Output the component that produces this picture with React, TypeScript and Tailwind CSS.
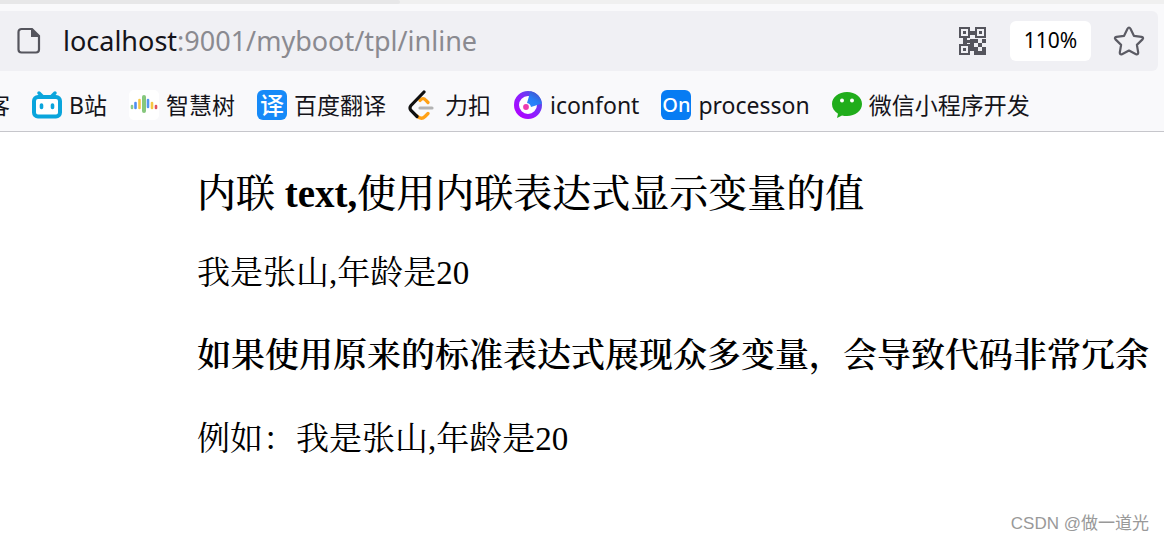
import type { ReactNode } from "react";

const qrCells: [number, number][] = [
  [15, 12], [23, 12],
  [11, 16], [19, 16],
  [15, 20], [23, 20],
  [19, 16], [19, 24],
  [11, 12],
];

function PageIcon() {
  return (
    <svg viewBox="0 0 24 28" className="h-7 w-6" aria-hidden="true">
      <path d="M4.500 2H15l7 7v13.500a3 3 0 0 1-3 3H4.500a3 3 0 0 1-3-3V5a3 3 0 0 1 3-3Z" fill="none" stroke="#55555d" strokeWidth="2.200" />
      <path d="M14 1.500V10h8.500Z" fill="#55555d" />
    </svg>
  );
}

function QrFinder({ x, y }: { x: number; y: number }) {
  return (
    <>
      <rect x={x + 1} y={y + 1} width="9" height="9" fill="none" stroke="#55555d" strokeWidth="2" />
      <rect x={x + 4} y={y + 4} width="3" height="3" fill="#55555d" />
    </>
  );
}

function QrIcon() {
  return (
    <svg viewBox="0 0 27 28" className="h-7 w-[27px]" shapeRendering="crispEdges" aria-hidden="true">
      <QrFinder x={0} y={0} />
      <QrFinder x={16} y={0} />
      <QrFinder x={0} y={17} />
      <path d="M11 4h5v4h-5zM4 11h4v6H4zM8 13h3v3H8zM11 20h4v4h-4zM15 24h4v4h-4zM23 24h4v4h-4z" fill="#55555d" />
      {qrCells.map(([x, y], i) => (
        <rect key={i} x={x} y={y} width="4" height="4" fill="#55555d" />
      ))}
    </svg>
  );
}

function StarIcon() {
  return (
    <svg viewBox="0 0 32 32" className="h-8 w-8" aria-hidden="true">
      <path
        d="M14.500 3.800q1.500-2.600 3 0l3.400 7 7.600 1.100q2.600.600 1 2.500l-5.600 5.500 1.300 7.600q.100 2.500-2.200 1.700L16 25.500l-7 3.700q-2.300.800-2.200-1.700l1.300-7.600-5.600-5.500q-1.600-1.900 1-2.500l7.600-1.100Z"
        fill="none" stroke="#5b5b64" strokeWidth="2.200" strokeLinejoin="round"
      />
    </svg>
  );
}

function BiliIcon() {
  return (
    <svg viewBox="0 0 30 30" className="size-[30px]" aria-hidden="true">
      <path d="M7 3l4 4M23 3l-4 4" stroke="#0aa5dc" strokeWidth="3.500" strokeLinecap="round" />
      <rect x="2" y="7" width="26" height="19.500" rx="4" fill="#fff" stroke="#0aa5dc" strokeWidth="4" />
      <path d="M9.500 15v2.500M20.500 15v2.500" stroke="#0aa5dc" strokeWidth="3.600" strokeLinecap="round" />
    </svg>
  );
}

function TreeIcon() {
  const bars: [number, number, number, string][] = [
    [3, 16, 18, "#8cc98a"],
    [6.5, 13, 18, "#4f8df0"],
    [10.5, 10, 18, "#f6c744"],
    [15, 7, 21, "#86c77c"],
    [19, 10, 17, "#5797ef"],
    [23, 13, 18, "#f6c744"],
    [27, 16, 18, "#e0525d"],
  ];
  return (
    <svg viewBox="0 0 30 30" className="size-[30px]" aria-hidden="true">
      <rect width="30" height="30" rx="5" fill="#fff" />
      {bars.map(([x, top, bottom, color]) => (
        <path key={x} d={`M${x} ${top}V${bottom}`} stroke={color} strokeWidth={x === 15 ? 4 : 2.6} strokeLinecap="round" />
      ))}
    </svg>
  );
}

function LeetIcon() {
  return (
    <svg viewBox="0 0 30 30" className="size-[30px]" fill="none" strokeLinecap="round" strokeWidth="3.200" aria-hidden="true">
      <path d="M12 10.500c2-2.500 4-2.500 6 0l2 2M9 26c3 3 6 2.500 8 .500l3-3" stroke="#ffa116" />
      <path d="M12 18h12" stroke="#b3b3b3" />
      <path d="M16 2L3 15.500q-2 2.500 0 5L9 26.500" stroke="#101010" />
    </svg>
  );
}

function IconfontIcon() {
  return (
    <svg viewBox="0 0 30 30" className="size-[30px]" aria-hidden="true">
      <defs>
        <linearGradient id="ring" x1="0" y1="1" x2="1" y2="0">
          <stop offset="0" stopColor="#b300ff" />
          <stop offset=".5" stopColor="#8c20ff" />
          <stop offset="1" stopColor="#405be0" />
        </linearGradient>
        <linearGradient id="wedge" x1="0" y1="1" x2=".6" y2="0">
          <stop offset="0" stopColor="#2c8bff" />
          <stop offset=".55" stopColor="#287cf5" />
          <stop offset="1" stopColor="#4652cc" />
        </linearGradient>
      </defs>
      <circle cx="15" cy="15" r="11.500" fill="#fff" stroke="url(#ring)" strokeWidth="5" />
      <path d="M17.500 1.200A14 14 0 0 1 28.900 13.500L18 17a5 5 0 0 0-4-4Z" fill="url(#wedge)" />
      <circle cx="13" cy="17" r="2.900" fill="#ed3bb0" />
    </svg>
  );
}

function WechatIcon() {
  return (
    <svg viewBox="0 0 30 30" className="size-[30px]" aria-hidden="true">
      <path d="M15 2C6.700 2 0 7.300 0 14c0 4 2.300 7.500 6 9.700L5 28l5-2.600c1.600.4 3.200.6 5 .6 8.300 0 15-5.300 15-12S23.300 2 15 2Z" fill="#20ad1b" />
      <circle cx="10" cy="10.500" r="2" fill="#fff" />
      <circle cx="20" cy="10.500" r="2" fill="#fff" />
    </svg>
  );
}

function Bookmark({ icon, children }: { icon: ReactNode; children: ReactNode }) {
  return (
    <a href="#" className="flex shrink-0 items-center gap-[7px] whitespace-nowrap">
      {icon}
      <span>{children}</span>
    </a>
  );
}

export default function App() {
  return (
    <div className="flex min-h-screen flex-col overflow-x-hidden bg-white text-black">
      <header className="border-b border-[#c6c6cb] bg-[#f9f9fb] font-['Noto_Sans','Noto_Sans_CJK_SC',sans-serif] text-[#15141a]">
        <div className="h-1 bg-[#f0f0f0]">
          <div className="h-1 w-[400px] rounded-r-full bg-[#e7e7e8]" />
        </div>
        <div className="mt-[7px] mr-1.5 flex h-[60px] items-center rounded-r-md bg-[#f0f0f4] pr-[13px] pl-[17px]">
          <PageIcon />
          <a href="#" className="ml-[22px] flex-1 text-[27px] leading-9 whitespace-nowrap text-[#8a8a90]">
            <span className="text-[#15141a]">localhost</span>:9001/myboot/tpl/inline
          </a>
          <button type="button" aria-label="QR" className="mr-6"><QrIcon /></button>
          <button type="button" className="mr-[22px] h-10 w-[81px] rounded-md bg-white text-[21px] text-black">110%</button>
          <button type="button" aria-label="Bookmark"><StarIcon /></button>
        </div>
        <nav className="flex h-[60px] items-center gap-[22px] pt-2 text-[23px] leading-8">
          <a href="#" className="-ml-[13px] shrink-0">客</a>
          <Bookmark icon={<BiliIcon />}>B站</Bookmark>
          <Bookmark icon={<TreeIcon />}>智慧树</Bookmark>
          <Bookmark icon={<span className="flex size-[30px] items-center justify-center rounded-md bg-[#168af8] text-2xl font-medium text-white">译</span>}>百度翻译</Bookmark>
          <Bookmark icon={<LeetIcon />}>力扣</Bookmark>
          <Bookmark icon={<IconfontIcon />}>iconfont</Bookmark>
          <Bookmark icon={<span className="flex size-[30px] items-center justify-center rounded-md bg-[#077cf3] text-xl font-medium text-white">On</span>}>processon</Bookmark>
          <Bookmark icon={<WechatIcon />}>微信小程序开发</Bookmark>
        </nav>
      </header>
      <main className="pt-9 pl-[197px] font-['Liberation_Serif','Noto_Serif_CJK_SC','Noto_Sans_CJK_SC',serif] whitespace-nowrap">
        <h2 className="text-[39px] leading-[52px] font-medium">内联 <b>text,</b>使用内联表达式显示变量的值</h2>
        <p className="mt-7 text-[33px] leading-[50px]">我是张山,年龄是20</p>
        <h3 className="mt-[33px] text-[34px] leading-[50px] font-semibold">如果使用原来的标准表达式展现众多变量，会导致代码非常冗余</h3>
        <p className="mt-[33px] text-[33px] leading-[50px]">例如：我是张山,年龄是20</p>
      </main>
      <footer className="mt-auto pr-[15px] pb-1.5 text-right font-['Liberation_Sans','Noto_Sans_CJK_SC',sans-serif] text-[17px] leading-6 text-[#999]">CSDN @做一道光</footer>
    </div>
  );
}
